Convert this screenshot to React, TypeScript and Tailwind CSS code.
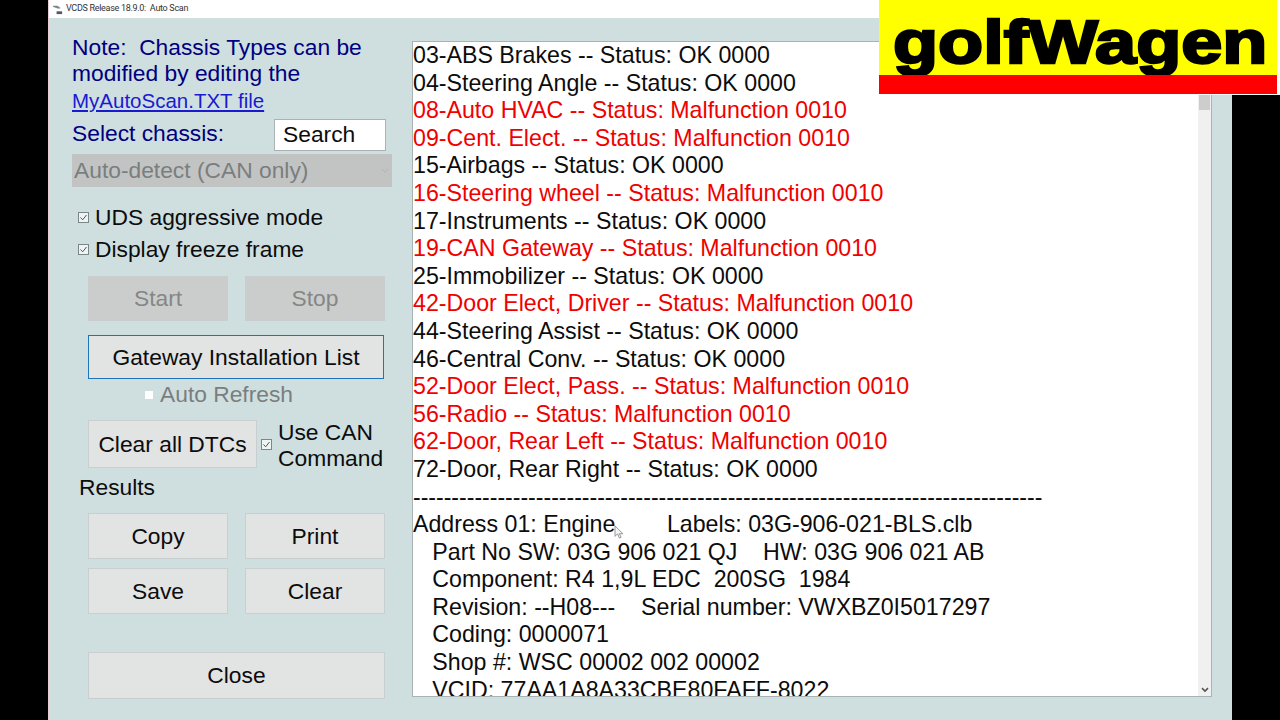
import React from 'react';

const RESULTS = [
  { text: '03-ABS Brakes -- Status: OK 0000' },
  { text: '04-Steering Angle -- Status: OK 0000' },
  { text: '08-Auto HVAC -- Status: Malfunction 0010', bad: true },
  { text: '09-Cent. Elect. -- Status: Malfunction 0010', bad: true },
  { text: '15-Airbags -- Status: OK 0000' },
  { text: '16-Steering wheel -- Status: Malfunction 0010', bad: true },
  { text: '17-Instruments -- Status: OK 0000' },
  { text: '19-CAN Gateway -- Status: Malfunction 0010', bad: true },
  { text: '25-Immobilizer -- Status: OK 0000' },
  { text: '42-Door Elect, Driver -- Status: Malfunction 0010', bad: true },
  { text: '44-Steering Assist -- Status: OK 0000' },
  { text: '46-Central Conv. -- Status: OK 0000' },
  { text: '52-Door Elect, Pass. -- Status: Malfunction 0010', bad: true },
  { text: '56-Radio -- Status: Malfunction 0010', bad: true },
  { text: '62-Door, Rear Left -- Status: Malfunction 0010', bad: true },
  { text: '72-Door, Rear Right -- Status: OK 0000' },
  { text: '-'.repeat(82), rule: true },
  { text: 'Address 01: Engine        Labels: 03G-906-021-BLS.clb' },
  { text: '   Part No SW: 03G 906 021 QJ    HW: 03G 906 021 AB' },
  { text: '   Component: R4 1,9L EDC  200SG  1984' },
  { text: '   Revision: --H08---    Serial number: VWXBZ0I5017297' },
  { text: '   Coding: 0000071' },
  { text: '   Shop #: WSC 00002 002 00002' },
  { text: '   VCID: 77AA1A8A33CBE80FAFF-8022' },
];

const Check = () => (
  <span className="flex h-[11px] w-[11px] shrink-0 items-center justify-center border border-[#7d8686] bg-[#eef3f3]">
    <svg viewBox="0 0 9 9" className="h-[9px] w-[9px]" fill="none" stroke="#555" strokeWidth="1">
      <path d="M1.5 4.5 3.7 6.8 7.5 2" />
    </svg>
  </span>
);

const Btn = ({ label, className = '', disabled = false }: { label: string; className?: string; disabled?: boolean }) => (
  <div
    className={`flex items-center justify-center border ${
      disabled
        ? 'border-[#cacdcd] bg-[#cbcdcd] text-[#858787]'
        : 'border-[#c9cfcf] bg-[#e2e3e3] text-[#0c0c0c]'
    } ${className}`}
  >
    {label}
  </div>
);

const App = () => {
  return (
    <div className="relative flex h-[720px] w-[1280px] justify-center overflow-hidden bg-black font-['Liberation_Sans',Arial,sans-serif] text-[22.8px]">
      <div className="flex w-[1184px] flex-col border-l border-[#e9cdd6] bg-[#cfdfe0]">
        <div className="flex h-[18px] shrink-0 items-center gap-[3px] bg-white pl-[3px] font-['Roboto',sans-serif] text-[9px] tracking-[-0.3px] text-[#333]">
          <svg viewBox="0 0 12 12" className="h-[11px] w-[11px]">
            <path d="M1 2h5l3 2v1H6L1 3z" fill="#7a8a90" />
            <rect x="5" y="8" width="6" height="3" fill="#556" />
          </svg>
          <span className="whitespace-pre">VCDS Release 18.9.0:  Auto Scan</span>
        </div>

        <div className="flex min-h-0 flex-1">
          <div className="w-[363px] shrink-0 pl-[23px]">
            <div className="whitespace-pre pt-[16px] leading-[26px] text-[#00007f]">
              <div>Note:  Chassis Types can be</div>
              <div>modified by editing the</div>
              <div className="mt-[2px] text-[20.5px] text-[#1a1ad0] underline">MyAutoScan.TXT file</div>
            </div>

            <div className="mt-[5px] flex h-[33px] items-start justify-between pr-[26px] text-[#00007f]">
              <span className="leading-[28px]">Select chassis:</span>
              <div className="flex h-[32px] w-[112px] items-center border border-[#a9b3b3] bg-white pb-[1px] pl-[8px] text-[#0c0c0c]">Search</div>
            </div>

            <div className="mt-[2px] flex h-[33px] w-[320px] items-center justify-between bg-[#c2c4c4] pl-[2px] pr-[3px] text-[#7b7e7e]">
              <span>Auto-detect (CAN only)</span>
              <svg viewBox="0 0 10 6" className="h-[5px] w-[8px]" fill="none" stroke="#aeb3b3" strokeWidth="1.2">
                <path d="M1 1l4 4 4-4" />
              </svg>
            </div>

            <div className="mt-[14px] flex h-[32px] items-center gap-[6px] pl-[6px] text-[#0c0c0c]">
              <Check />
              UDS aggressive mode
            </div>
            <div className="flex h-[33px] items-center gap-[6px] pl-[6px] text-[#0c0c0c]">
              <Check />
              Display freeze frame
            </div>

            <div className="ml-[16px] mt-[10px] flex gap-[17px]">
              <Btn label="Start" disabled className="h-[45px] w-[140px]" />
              <Btn label="Stop" disabled className="h-[45px] w-[140px]" />
            </div>

            <div className="ml-[16px] mt-[14px] flex h-[44px] w-[296px] items-center justify-center border border-[#1f74b8] bg-[#e2e3e3] text-[#0c0c0c]">
              Gateway Installation List
            </div>

            <div className="mt-[2px] flex h-[27px] items-center gap-[7px] pl-[73px] text-[#7b7e7e]">
              <span className="h-[8px] w-[8px] bg-white" />
              Auto Refresh
            </div>

            <div className="ml-[16px] mt-[10px] flex items-center">
              <Btn label="Clear all DTCs" className="h-[48px] w-[169px]" />
              <div className="ml-[4px] flex items-center gap-[6px] text-[#0c0c0c]">
                <Check />
                <div className="translate-y-[1px] leading-[26px]">
                  <div>Use CAN</div>
                  <div>Command</div>
                </div>
              </div>
            </div>

            <div className="ml-[7px] mt-[3px] h-[40px] leading-[28px] text-[#0c0c0c]">Results</div>

            <div className="ml-[16px] grid w-[297px] grid-cols-2 gap-x-[17px] gap-y-[9px]">
              <Btn label="Copy" className="h-[46px] w-[140px]" />
              <Btn label="Print" className="h-[46px] w-[140px]" />
              <Btn label="Save" className="h-[46px] w-[140px]" />
              <Btn label="Clear" className="h-[46px] w-[140px]" />
            </div>

            <Btn label="Close" className="ml-[16px] mt-[38px] h-[47px] w-[297px]" />
          </div>

          <div className="mb-[23px] mt-[23px] flex w-[800px] shrink-0 overflow-hidden border border-[#a9b3b3] bg-white">
            <div className="min-w-0 flex-1 overflow-hidden text-[23.2px] leading-[27.6px]">
              {RESULTS.map((line, i) => (
                <div
                  key={i}
                  className={`whitespace-pre ${line.bad ? 'text-[#f00000]' : 'text-[#0c0c0c]'} ${line.rule ? 'text-[23.05px]' : ''}`}
                >
                  {line.text}
                </div>
              ))}
            </div>
            <div className="flex w-[13px] shrink-0 flex-col justify-between bg-[#f0f0f0]">
              <div className="mx-auto h-[68px] w-[11px] bg-[#cdcdcd]" />
              <svg viewBox="0 0 10 8" className="mx-auto mb-[3px] h-[6px] w-[8px]" fill="none" stroke="#555" strokeWidth="2">
                <path d="M1 1.5l4 4 4-4" />
              </svg>
            </div>
          </div>
        </div>
      </div>

      {/* mouse pointer */}
      <svg viewBox="0 0 10 16" className="absolute left-[614px] top-[525px] h-[14px] w-[9px]" fill="#f4f4f4" stroke="#8a8a8a" strokeWidth="1">
        <path d="M1 1v12l3-3 2 5 2-1-2-4h4z" />
      </svg>

      {/* channel logo */}
      <div className="absolute right-0 top-0 h-[95px] w-[401px] bg-white pr-[3px]">
        <div className="flex h-[75px] items-start overflow-hidden bg-[#ffff00] pl-[14px] text-[62px] font-bold leading-none text-black [-webkit-text-stroke:2.5px_black]">
          <span className="mt-[11px] origin-left scale-x-[1.19]">golfWagen</span>
        </div>
        <div className="h-[19px] bg-[#ff0000]" />
      </div>
    </div>
  );
};

export default App;
